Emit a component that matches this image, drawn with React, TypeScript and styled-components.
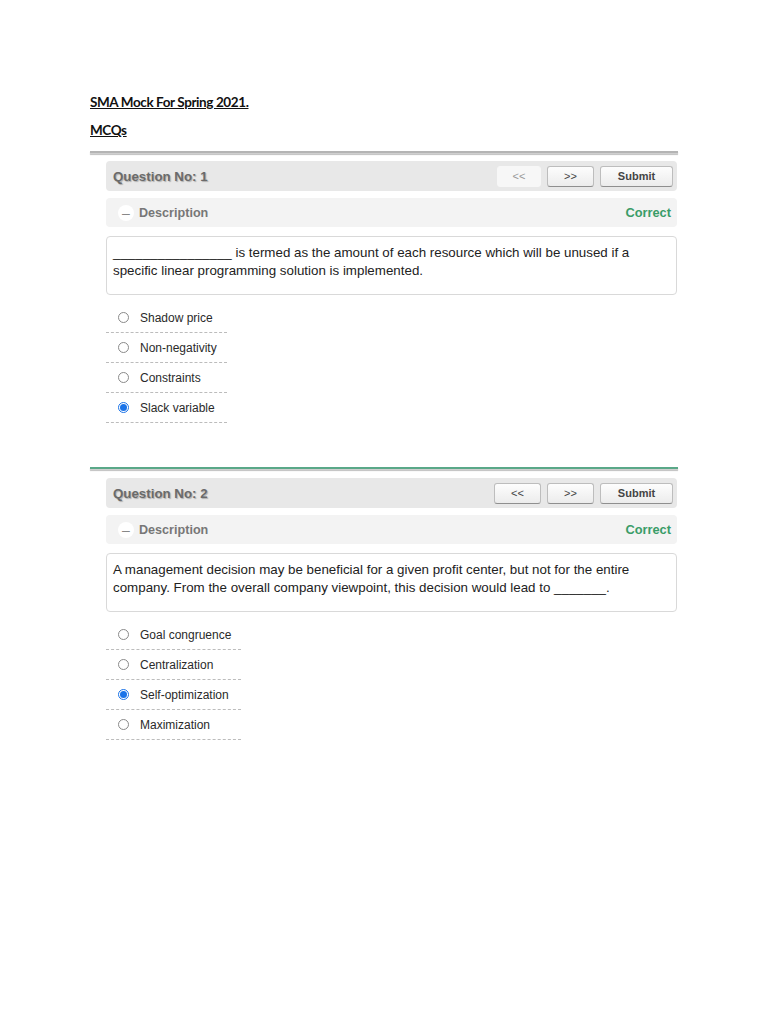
import React from "react";
import styled, { createGlobalStyle } from "styled-components";

const Global = createGlobalStyle`
  html, body { margin: 0; padding: 0; background: #fff; }
  body { font-family: "Liberation Sans", Arial, sans-serif; }
`;

const Page = styled.div`
  width: 768px;
  min-height: 1024px;
  padding: 93px 0 0 90px;
  box-sizing: border-box;
  display: flex;
  flex-direction: column;
`;

const DocTitle = styled.div`
  font-family: Lato, "Open Sans", sans-serif;
  font-weight: 700;
  font-size: 13.5px;
  letter-spacing: -0.4px;
  line-height: 18px;
  color: #111;
  text-decoration: underline;
  margin-bottom: 10px;
`;

const Rule = styled.div<{ $green?: boolean }>`
  width: 588px;
  height: 2px;
  background: ${(p) => (p.$green ? "#5aa888" : "#b4b4b4")};
  box-shadow: 0 1px 1px rgba(0, 0, 0, 0.25);
  border-bottom: 1px solid #cfcfcf;
`;

const Section = styled.div<{ $top: number }>`
  margin-top: ${(p) => p.$top}px;
  display: flex;
  flex-direction: column;
`;

const Body = styled.div`
  padding: 0 0 0 16px;
  width: 571px;
  display: flex;
  flex-direction: column;
`;

const HeaderBar = styled.div<{ $gap: number }>`
  margin-top: ${(p) => p.$gap}px;
  height: 30px;
  background: #e8e8e8;
  border-radius: 4px;
  display: flex;
  align-items: center;
  justify-content: space-between;
  padding: 0 4px 0 7px;
`;

const QTitle = styled.div`
  font-weight: 700;
  font-size: 13.3px;
  color: #6a6a6a;
  text-shadow: 1px 1px 1px rgba(0, 0, 0, 0.25);
`;

const Buttons = styled.div`
  display: flex;
  gap: 6px;
  align-items: center;
`;

const Btn = styled.button<{ $w: number; $disabled?: boolean; $bold?: boolean }>`
  width: ${(p) => p.$w}px;
  height: 21px;
  font-family: "Liberation Sans", Arial, sans-serif;
  font-size: 11px;
  font-weight: ${(p) => (p.$bold ? 700 : 400)};
  color: ${(p) => (p.$disabled ? "#999" : "#444")};
  background: ${(p) =>
    p.$disabled ? "#f7f7f7" : "linear-gradient(#fdfdfd, #ececec)"};
  border: 1px solid ${(p) => (p.$disabled ? "#f7f7f7" : "#bdbdbd")};
  border-bottom-color: ${(p) => (p.$disabled ? "#f7f7f7" : "#8f8f8f")};
  border-radius: 3px;
  padding: 0;
  margin: 0;
`;

const DescBar = styled.div`
  margin-top: 7px;
  height: 29px;
  background: #f3f3f3;
  border-radius: 4px;
  display: flex;
  align-items: center;
  justify-content: space-between;
  padding: 0 6px 0 12px;
`;

const DescLeft = styled.div`
  display: flex;
  align-items: center;
  gap: 5px;
  font-weight: 700;
  font-size: 12.6px;
  color: #777;
`;

const Minus = styled.span`
  width: 16px;
  height: 16px;
  border-radius: 50%;
  background: #fff;
  display: flex;
  align-items: center;
  justify-content: center;
  color: #888;
  font-weight: 400;
  font-size: 14px;
`;

const Correct = styled.div`
  font-weight: 700;
  font-size: 12.8px;
  color: #3a9c68;
`;

const QBox = styled.div`
  margin-top: 9px;
  height: 59px;
  box-sizing: border-box;
  border: 1px solid #d9d9d9;
  border-radius: 4px;
  padding: 7px 6px 0 6px;
  font-size: 13.35px;
  line-height: 18px;
  color: #222;
`;

const Options = styled.div`
  margin-top: 8px;
  display: flex;
  flex-direction: column;
`;

const Option = styled.label<{ $w: number }>`
  width: ${(p) => p.$w}px;
  height: 30px;
  box-sizing: border-box;
  border-bottom: 1px dashed #bcbcbc;
  display: flex;
  align-items: center;
  gap: 11px;
  padding-left: 12px;
  font-size: 12px;
  color: #2a2a2a;
`;

const Radio = styled.span<{ $checked?: boolean }>`
  width: 11px;
  height: 11px;
  border-radius: 50%;
  box-sizing: border-box;
  border: 1px solid ${(p) => (p.$checked ? "#1a73e8" : "#8a8a8a")};
  background: #fff;
  display: flex;
  align-items: center;
  justify-content: center;
  &::after {
    content: "";
    width: 7px;
    height: 7px;
    border-radius: 50%;
    background: ${(p) => (p.$checked ? "#1a73e8" : "transparent")};
  }
`;

type Q = {
  no: number;
  text: React.ReactNode;
  options: string[];
  checked: number;
  optWidth: number;
  prevDisabled: boolean;
  green?: boolean;
  top: number;
  gap: number;
};

const questions: Q[] = [
  {
    no: 1,
    text: (
      <>
        ________________ is termed as the amount of each resource which will be
        unused if a specific linear programming solution is implemented.
      </>
    ),
    options: ["Shadow price", "Non-negativity", "Constraints", "Slack variable"],
    checked: 3,
    optWidth: 121,
    prevDisabled: true,
    top: 2,
    gap: 7,
  },
  {
    no: 2,
    text: (
      <>
        A management decision may be beneficial for a given profit center, but
        not for the entire company. From the overall company viewpoint, this
        decision would lead to _______.
      </>
    ),
    options: [
      "Goal congruence",
      "Centralization",
      "Self-optimization",
      "Maximization",
    ],
    checked: 2,
    optWidth: 135,
    prevDisabled: false,
    green: true,
    top: 44,
    gap: 8,
  },
];

export default function App() {
  return (
    <Page>
      <Global />
      <DocTitle>SMA Mock For Spring 2021.</DocTitle>
      <DocTitle>MCQs</DocTitle>
      {questions.map((q) => (
        <Section key={q.no} $top={q.top}>
          <Rule $green={q.green} />
          <Body>
            <HeaderBar $gap={q.gap}>
              <QTitle>Question No: {q.no}</QTitle>
              <Buttons>
                <Btn $w={q.prevDisabled ? 44 : 47} $disabled={q.prevDisabled}>
                  &lt;&lt;
                </Btn>
                <Btn $w={47}>&gt;&gt;</Btn>
                <Btn $w={73} $bold>
                  Submit
                </Btn>
              </Buttons>
            </HeaderBar>
            <DescBar>
              <DescLeft>
                <Minus>–</Minus>
                Description
              </DescLeft>
              <Correct>Correct</Correct>
            </DescBar>
            <QBox>{q.text}</QBox>
            <Options>
              {q.options.map((o, i) => (
                <Option key={o} $w={q.optWidth}>
                  <Radio $checked={i === q.checked} />
                  {o}
                </Option>
              ))}
            </Options>
          </Body>
        </Section>
      ))}
    </Page>
  );
}
